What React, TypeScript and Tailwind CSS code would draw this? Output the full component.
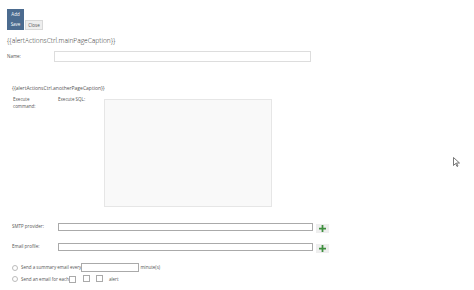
import React from "react";

function PlusButton() {
  return (
    <button className="ml-[3px] flex h-[9px] w-[13px] items-center justify-center bg-[#eeeeee]">
      <svg width="7" height="7" viewBox="0 0 8 8">
        <path d="M3 0h2v3h3v2H5v3H3V5H0V3h3z" fill="#3f8f3f" />
      </svg>
    </button>
  );
}

function Radio() {
  return <span className="inline-block h-[6px] w-[6px] rounded-full border border-[#bbbbbb] bg-white" />;
}

function Check() {
  return <span className="inline-block h-[7px] w-[7px] border border-[#aaaaaa] bg-white" />;
}

export default function App() {
  return (
    <div className="relative h-[290px] w-[474px] bg-white font-['Open_Sans',sans-serif] text-[#555555]">
      <div className="flex pl-[7px] pt-[9px]">
        <div className="flex w-[17px] flex-col bg-[#4b6b8f] text-[4.5px] leading-[10px] text-white">
          <span className="text-center">Add</span>
          <span className="text-center">Save</span>
        </div>
        <div className="mt-[11px] ml-[1px] flex h-[10px] w-[18px] items-center justify-center border border-[#d8d8d8] bg-[#eeeeee] text-[4.5px] text-[#555]">
          Close
        </div>
      </div>

      <h1 className="mt-[6px] pl-[7px] text-[6.6px] font-light leading-[10px] text-[#333333]">
        {"{{alertActionsCtrl.mainPageCaption}}"}
      </h1>

      <div className="mt-[5px] flex items-center pl-[7px]">
        <span className="w-[47px] text-[4.5px]">Name:</span>
        <div className="h-[11px] w-[257px] border border-[#dddddd] bg-white" />
      </div>

      <div className="mt-[22px] pl-[12px] text-[5px] leading-[8px] text-[#555]">
        {"{{alertActionsCtrl.anotherPageCaption}}"}
      </div>

      <div className="mt-[7px] flex pl-[13px]">
        <div className="mt-[-3px] w-[45px] text-[4.5px] leading-[7px]">
          Execute
          <br />
          command:
        </div>
        <div className="mt-[-3px] w-[46px] text-[4.5px] leading-[7px]">Execute SQL:</div>
        <div className="h-[108px] w-[168px] border border-[#e6e6e6] bg-[#f9f9f9]" />
      </div>

      <div className="mt-[13px] flex items-center pl-[12px]">
        <span className="w-[46px] text-[4.5px]">SMTP provider:</span>
        <div className="h-[8px] w-[255px] border border-[#aaaaaa] bg-white" />
        <div className="mt-[4px]">
          <PlusButton />
        </div>
      </div>

      <div className="mt-[7px] flex items-center pl-[12px]">
        <span className="w-[46px] text-[4.5px]">Email profile:</span>
        <div className="h-[8px] w-[255px] border border-[#aaaaaa] bg-white" />
        <div className="mt-[4px]">
          <PlusButton />
        </div>
      </div>

      <div className="mt-[10px] flex items-center pl-[12px] text-[4.5px]">
        <Radio />
        <span className="ml-[3px]">Send a summary email every</span>
        <div className="h-[9px] w-[58px] border border-[#aaaaaa] bg-white" />
        <span className="ml-[1px]">minute(s)</span>
      </div>

      <div className="mt-[3px] flex items-center pl-[12px] text-[4.5px]">
        <Radio />
        <span className="ml-[3px]">Send an email for each</span>
        <Check />
        <span className="ml-[7px]">
          <Check />
        </span>
        <span className="ml-[6px]">
          <Check />
        </span>
        <span className="ml-[6px]">alert</span>
      </div>

      <svg className="absolute left-[453px] top-[157px]" width="7" height="10" viewBox="0 0 7 10">
        <path d="M0.5 0.5v8l2-2 1.5 3 1-0.5-1.5-3h3z" fill="#ffffff" stroke="#555555" strokeWidth="0.8" />
      </svg>
    </div>
  );
}
